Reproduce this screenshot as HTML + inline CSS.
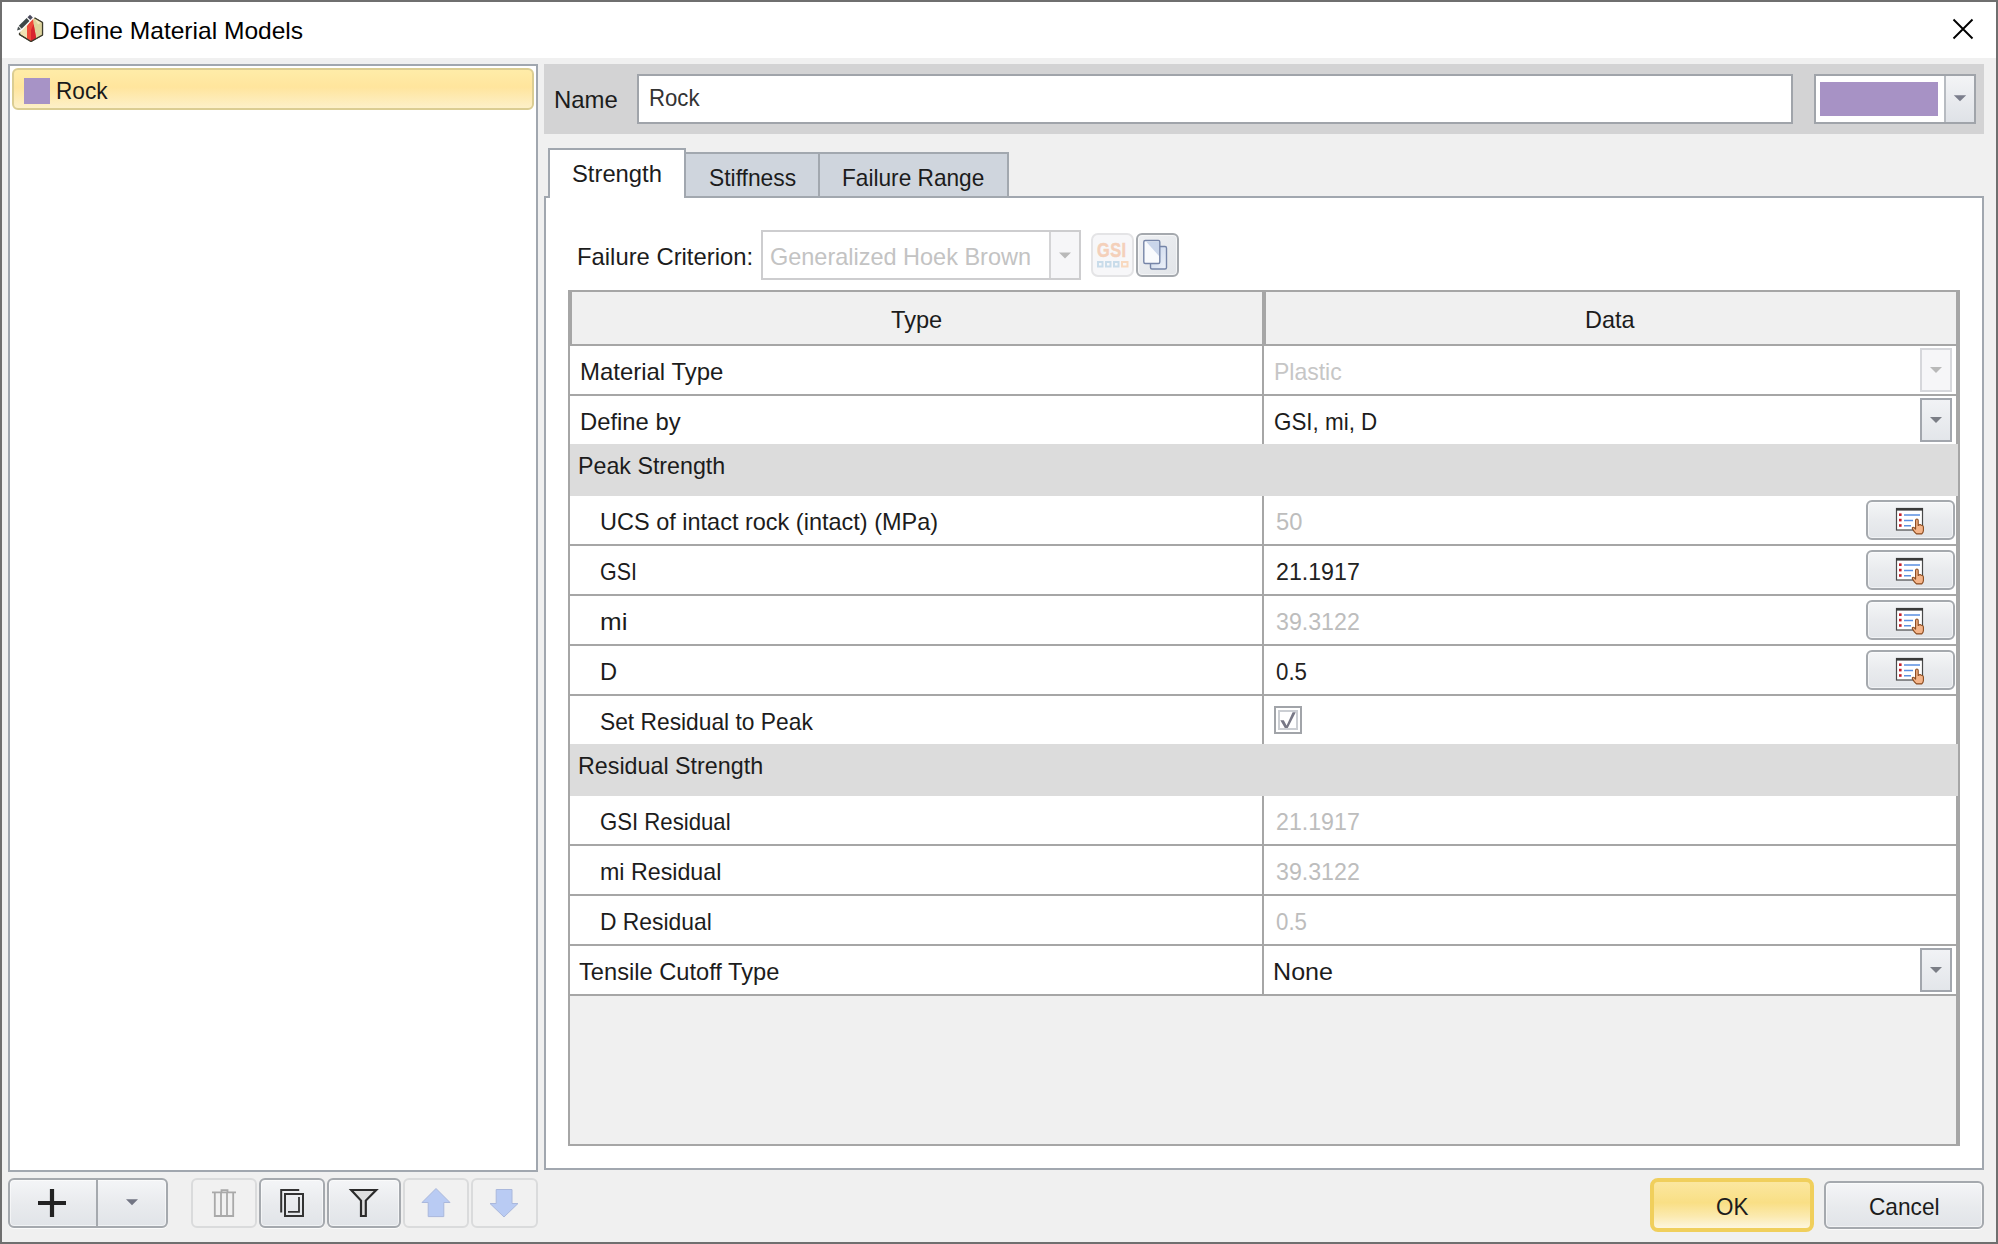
<!DOCTYPE html><html><head><meta charset="utf-8"><title>Define Material Models</title><style>
*{box-sizing:border-box}
html,body{margin:0;padding:0}
body{width:1998px;height:1244px;position:relative;overflow:hidden;background:#f0f0f0;font-family:"Liberation Sans",sans-serif}
.a{position:absolute}
.t{position:absolute;white-space:pre;transform-origin:0 0;display:block}
.win{left:0;top:0;width:1998px;height:1244px;border:2px solid #6f6f6f;background:#f0f0f0}
.titlebar{left:2px;top:2px;width:1994px;height:56px;background:#fff}
.panel{background:#fff;border:2px solid #a1a7af}
.btn{border:2px solid #a5a9ae;border-radius:6px;box-shadow:inset 0 0 0 1px rgba(255,255,255,.55),0 1px 0 rgba(255,255,255,.7);background:linear-gradient(#f4f5f7,#e9ebee 50%,#e1e4e8)}
.btn.dis{border-color:#dadbdc;background:#f1f1f1;box-shadow:none}
.hline{background:#a6a6a6;height:2px}
.vline{background:#a6a6a6;width:2px}
.sect{background:#dcdcdc}
.dd{border:2px solid #a2a6ad;background:linear-gradient(#f1f2f5,#e3e6ea)}
.dd.dis{border-color:#d6d7db;background:#f6f6f8}
svg{position:absolute;overflow:visible}
</style></head><body>
<div class="a win"></div>
<div class="a titlebar"></div>
<svg style="left:14px;top:12px" width="34" height="34" viewBox="14 12 34 34">
<polygon points="33,17 42.5,22.5 42.5,35 31,41.5 19.5,34.5 19.5,29" fill="#f1e2b4" stroke="#3d3b2c" stroke-width="1.2" stroke-linejoin="round"/>
<polygon points="34,17.5 42.5,22.5 42.5,35 36,38.5 33.5,24" fill="#ddd39c"/>
<polygon points="34,17.5 38,24.5 42,22.3" fill="#f3e6b8"/>
<polygon points="33,17.5 27,26 27,38.8 31,41.2 36.2,38.2 33.6,24" fill="#ee4a3a"/>
<polygon points="31,30 33.6,24 36.2,38.2 31,41.2" fill="#d8242f"/>
<polygon points="33,17 42.5,22.5 42.5,35 31,41.5 19.5,34.5 19.5,29" fill="none" stroke="#3d3b2c" stroke-width="1.2" stroke-linejoin="round"/>
<g transform="translate(17,30.5) rotate(-45)">
<rect x="-1" y="-3.4" width="23" height="6.8" fill="#fff"/>
<polygon points="0,0 3.6,-2 3.6,2" fill="#474f50"/>
<rect x="4.6" y="-2" width="11" height="4" fill="#3e4848"/>
<rect x="16.800" y="-2" width="3.6" height="4" fill="#4b4a5c"/>
</g>
</svg>
<span class="t" style="left:51.55px;top:19.0px;font-size:24px;line-height:24px;color:#000;transform:scaleX(1.0230)">Define Material Models</span>
<svg style="left:1950px;top:16px" width="26" height="26" viewBox="1950 16 26 26"><path d="M1953.5 19.5 L1972.5 38.5 M1972.5 19.5 L1953.5 38.5" stroke="#000" stroke-width="1.9" fill="none"/></svg>
<div class="a panel" style="left:8px;top:64px;width:530px;height:1108px"></div>
<div class="a" style="left:12px;top:68px;width:522px;height:42px;border:2px solid #dbcd92;border-radius:6px;background:linear-gradient(#ffeca8,#ffe59d 45%,#fdf0c8)"></div>
<div class="a" style="left:24px;top:78px;width:26px;height:26px;background:#a793c6"></div>
<span class="t" style="left:56.11px;top:79.0px;font-size:24px;line-height:24px;color:#1a1a1a;transform:scaleX(0.9434)">Rock</span>
<div class="a" style="left:544px;top:64px;width:1440px;height:70px;background:#d3d3d4"></div>
<span class="t" style="left:553.81px;top:88.0px;font-size:24px;line-height:24px;color:#1c1c1c;transform:scaleX(0.9967)">Name</span>
<div class="a" style="left:637px;top:74px;width:1156px;height:50px;background:#fff;border:2px solid #a0a4aa"></div>
<span class="t" style="left:649.15px;top:86.0px;font-size:24px;line-height:24px;color:#333;transform:scaleX(0.9245)">Rock</span>
<div class="a" style="left:1814px;top:74px;width:162px;height:50px;background:#fff;border:2px solid #a0a4aa"></div>
<div class="a" style="left:1820px;top:82px;width:118px;height:34px;background:#a792c5"></div>
<div class="a" style="left:1944px;top:76px;width:30px;height:46px;border-left:2px solid #b7bbc1;background:linear-gradient(#f3f4f6,#dfe2e7)"></div>
<svg style="left:1950px;top:90px" width="20" height="16" viewBox="1950 90 20 16"><polygon points="1953.8,95.2 1966.2,95.2 1960,101.2" fill="#7b7e8c"/></svg>
<div class="a panel" style="left:544px;top:196px;width:1440px;height:974px"></div>
<div class="a" style="left:684px;top:152px;width:136px;height:46px;background:#cfd5dd;border:2px solid #a2a8af"></div>
<div class="a" style="left:818px;top:152px;width:191px;height:46px;background:#cfd5dd;border:2px solid #a2a8af"></div>
<div class="a" style="left:548px;top:148px;width:138px;height:50px;background:#fff;border:2px solid #a1a7af;border-bottom:none"></div>
<span class="t" style="left:572.01px;top:162.0px;font-size:24px;line-height:24px;color:#1c1c1c;transform:scaleX(0.9910)">Strength</span>
<span class="t" style="left:708.55px;top:166.0px;font-size:24px;line-height:24px;color:#1c1c1c;transform:scaleX(0.9511)">Stiffness</span>
<span class="t" style="left:842.01px;top:166.0px;font-size:24px;line-height:24px;color:#1c1c1c;transform:scaleX(0.9439)">Failure Range</span>
<span class="t" style="left:576.52px;top:245.0px;font-size:24px;line-height:24px;color:#1c1c1c;transform:scaleX(0.9925)">Failure Criterion:</span>
<div class="a" style="left:761px;top:230px;width:320px;height:50px;background:#fff;border:2px solid #cdcdcf"></div>
<div class="a" style="left:1049px;top:232px;width:30px;height:46px;border-left:2px solid #d4d4d6;background:#f6f6f8"></div>
<svg style="left:1055px;top:248px" width="20" height="16" viewBox="1055 248 20 16"><polygon points="1059,252.5 1071,252.5 1065,258.5" fill="#b9b9b9"/></svg>
<span class="t" style="left:770.32px;top:245.0px;font-size:24px;line-height:24px;color:#c3c3c3;transform:scaleX(0.9781)">Generalized Hoek Brown</span>
<div class="a" style="left:1091px;top:233px;width:43px;height:44px;border:2px solid #e4e4e6;border-radius:7px;background:#f7f7f9"></div>
<span class="t" style="left:1096.5px;top:239px;font-size:21px;line-height:21px;font-weight:bold;color:#f4d0ba;-webkit-text-stroke:0.5px #f4d0ba;transform:scaleX(0.78);letter-spacing:0.5px">GSI</span>
<svg style="left:1095px;top:258px" width="36" height="12" viewBox="1095 258 36 12"><g fill="none" stroke-width="2"><rect x="1098" y="262" width="4.5" height="4.5" stroke="#c9dcea"/><rect x="1106" y="262" width="4.5" height="4.5" stroke="#c9dcea"/><rect x="1114" y="262" width="4.5" height="4.5" stroke="#c9dcea"/><rect x="1122" y="262" width="5.5" height="4.5" stroke="#f8d9bf"/></g></svg>
<div class="a btn" style="left:1136px;top:233px;width:43px;height:44px;background:linear-gradient(135deg,#eef0f3,#e2e5e9)"></div>
<svg style="left:1140px;top:238px" width="34" height="34" viewBox="1140 238 34 34">
<defs><linearGradient id="cg" x1="0" y1="0" x2="1" y2="1"><stop offset="0" stop-color="#c5d3ea"/><stop offset="1" stop-color="#eef2f9"/></linearGradient></defs>
<rect x="1150.5" y="246.5" width="16" height="22.5" rx="1.5" fill="url(#cg)" stroke="#7685a8" stroke-width="1.4"/>
<rect x="1143.8" y="240.5" width="16" height="23" rx="1.5" fill="#f8fafd" stroke="#7685a8" stroke-width="1.4"/>
<polygon points="1146,241.5 1159,241.5 1159,256" fill="#c9d5ea"/>
</svg>
<div class="a" style="left:568px;top:290px;width:1392px;height:856px;background:#f0f0f0;border:2px solid #a6a6a6"></div>
<div class="a" style="left:568px;top:290px;width:4px;height:56px;background:#a6a6a6"></div>
<div class="a" style="left:1262px;top:290px;width:4px;height:56px;background:#a6a6a6"></div>
<div class="a" style="left:1956px;top:290px;width:4px;height:856px;background:#a6a6a6"></div>
<div class="a hline" style="left:568px;top:344px;width:1392px"></div>
<div class="a" style="left:570px;top:346px;width:1386px;height:650px;background:#fff"></div>
<div class="a hline" style="left:570px;top:394px;width:1388px"></div>
<div class="a hline" style="left:570px;top:544px;width:1388px"></div>
<div class="a hline" style="left:570px;top:594px;width:1388px"></div>
<div class="a hline" style="left:570px;top:644px;width:1388px"></div>
<div class="a hline" style="left:570px;top:694px;width:1388px"></div>
<div class="a hline" style="left:570px;top:844px;width:1388px"></div>
<div class="a hline" style="left:570px;top:894px;width:1388px"></div>
<div class="a hline" style="left:570px;top:944px;width:1388px"></div>
<div class="a hline" style="left:570px;top:994px;width:1388px"></div>
<div class="a vline" style="left:1262px;top:346px;height:650px"></div>
<div class="a sect" style="left:570px;top:444px;width:1388px;height:52px"></div>
<div class="a sect" style="left:570px;top:744px;width:1388px;height:52px"></div>
<span class="t" style="left:891.00px;top:308.0px;font-size:24px;line-height:24px;color:#1c1c1c;transform:scaleX(0.9843)">Type</span>
<span class="t" style="left:1585.04px;top:308.0px;font-size:24px;line-height:24px;color:#1c1c1c;transform:scaleX(0.9776)">Data</span>
<span class="t" style="left:579.50px;top:360.0px;font-size:24px;line-height:24px;color:#1c1c1c;transform:scaleX(0.9979)">Material Type</span>
<span class="t" style="left:579.52px;top:410.0px;font-size:24px;line-height:24px;color:#1c1c1c;transform:scaleX(0.9920)">Define by</span>
<span class="t" style="left:577.56px;top:454.0px;font-size:24px;line-height:24px;color:#1c1c1c;transform:scaleX(0.9678)">Peak Strength</span>
<span class="t" style="left:599.54px;top:510.0px;font-size:24px;line-height:24px;color:#1c1c1c;transform:scaleX(0.9789)">UCS of intact rock (intact) (MPa)</span>
<span class="t" style="left:599.61px;top:560.0px;font-size:24px;line-height:24px;color:#1c1c1c;transform:scaleX(0.8921)">GSI</span>
<span class="t" style="left:600.04px;top:610.0px;font-size:24px;line-height:24px;color:#1c1c1c;transform:scaleX(1.0818)">mi</span>
<span class="t" style="left:600.23px;top:660.0px;font-size:24px;line-height:24px;color:#1c1c1c;transform:scaleX(0.9857)">D</span>
<span class="t" style="left:599.55px;top:710.0px;font-size:24px;line-height:24px;color:#1c1c1c;transform:scaleX(0.9493)">Set Residual to Peak</span>
<span class="t" style="left:577.56px;top:754.0px;font-size:24px;line-height:24px;color:#1c1c1c;transform:scaleX(0.9702)">Residual Strength</span>
<span class="t" style="left:599.58px;top:810.0px;font-size:24px;line-height:24px;color:#1c1c1c;transform:scaleX(0.9237)">GSI Residual</span>
<span class="t" style="left:599.56px;top:860.0px;font-size:24px;line-height:24px;color:#1c1c1c;transform:scaleX(0.9680)">mi Residual</span>
<span class="t" style="left:599.60px;top:910.0px;font-size:24px;line-height:24px;color:#1c1c1c;transform:scaleX(0.9518)">D Residual</span>
<span class="t" style="left:579.40px;top:960.0px;font-size:24px;line-height:24px;color:#1c1c1c;transform:scaleX(0.9856)">Tensile Cutoff Type</span>
<span class="t" style="left:1273.59px;top:360.0px;font-size:24px;line-height:24px;color:#c6c6c6;transform:scaleX(0.9574)">Plastic</span>
<span class="t" style="left:1273.57px;top:410.0px;font-size:24px;line-height:24px;color:#1c1c1c;transform:scaleX(0.9330)">GSI, mi, D</span>
<span class="t" style="left:1276.01px;top:510.0px;font-size:24px;line-height:24px;color:#bdbdbd;transform:scaleX(0.9880)">50</span>
<span class="t" style="left:1275.53px;top:560.0px;font-size:24px;line-height:24px;color:#222;transform:scaleX(0.9659)">21.1917</span>
<span class="t" style="left:1275.53px;top:610.0px;font-size:24px;line-height:24px;color:#bdbdbd;transform:scaleX(0.9659)">39.3122</span>
<span class="t" style="left:1275.57px;top:660.0px;font-size:24px;line-height:24px;color:#222;transform:scaleX(0.9281)">0.5</span>
<span class="t" style="left:1275.53px;top:810.0px;font-size:24px;line-height:24px;color:#bdbdbd;transform:scaleX(0.9659)">21.1917</span>
<span class="t" style="left:1275.53px;top:860.0px;font-size:24px;line-height:24px;color:#bdbdbd;transform:scaleX(0.9659)">39.3122</span>
<span class="t" style="left:1275.57px;top:910.0px;font-size:24px;line-height:24px;color:#bdbdbd;transform:scaleX(0.9281)">0.5</span>
<span class="t" style="left:1272.91px;top:960.0px;font-size:24px;line-height:24px;color:#1c1c1c;transform:scaleX(1.0463)">None</span>
<div class="a dd dis" style="left:1920px;top:348px;width:32px;height:44px"></div>
<svg style="left:1926px;top:363px" width="20" height="14" viewBox="0 0 20 14"><polygon points="4,4 16,4 10,10" fill="#b9b9b9"/></svg>
<div class="a dd" style="left:1920px;top:398px;width:32px;height:44px"></div>
<svg style="left:1926px;top:413px" width="20" height="14" viewBox="0 0 20 14"><polygon points="4,4 16,4 10,10" fill="#7b7e86"/></svg>
<div class="a dd" style="left:1920px;top:948px;width:32px;height:44px"></div>
<svg style="left:1926px;top:963px" width="20" height="14" viewBox="0 0 20 14"><polygon points="4,4 16,4 10,10" fill="#7b7e86"/></svg>
<div class="a btn" style="left:1866px;top:500px;width:89px;height:40px"></div>
<svg style="left:1890px;top:504px" width="44" height="36" viewBox="1890 504 44 36">
<rect x="1896.5" y="508.5" width="26" height="21.5" fill="#fff" stroke="#4a4a4a" stroke-width="1.2"/>
<rect x="1896" y="508" width="27" height="2.6" fill="#3a3a3a"/>
<rect x="1899" y="513.4" width="2.6" height="2.6" fill="#c4202c"/><rect x="1899" y="518.8" width="2.6" height="2.6" fill="#c4202c"/><rect x="1899" y="524.2" width="2.6" height="2.6" fill="#c4202c"/>
<path d="M1904 515h16M1904 520.4h9M1904 525.8h7" stroke="#5b8fe0" stroke-width="1.5"/>
<path d="M1915.6 520.5c0-2 2.6-2 2.6 0v5l1.2-.7c1-.5 1.6 0 1.8.5l1 .2c.8.2 1.2.8 1.2 1.6v3.400c0 1.200-.8 2.600-1.600 3.400h-5.400c-1-.8-3-3.200-4-5.200-.6-1.200.8-2 1.800-1l1.400 1.400z" fill="#f5b58a" stroke="#8a4a1e" stroke-width="1.1" stroke-linejoin="round"/>
</svg>
<div class="a btn" style="left:1866px;top:550px;width:89px;height:40px"></div>
<svg style="left:1890px;top:554px" width="44" height="36" viewBox="1890 504 44 36">
<rect x="1896.5" y="508.5" width="26" height="21.5" fill="#fff" stroke="#4a4a4a" stroke-width="1.2"/>
<rect x="1896" y="508" width="27" height="2.6" fill="#3a3a3a"/>
<rect x="1899" y="513.4" width="2.6" height="2.6" fill="#c4202c"/><rect x="1899" y="518.8" width="2.6" height="2.6" fill="#c4202c"/><rect x="1899" y="524.2" width="2.6" height="2.6" fill="#c4202c"/>
<path d="M1904 515h16M1904 520.4h9M1904 525.8h7" stroke="#5b8fe0" stroke-width="1.5"/>
<path d="M1915.6 520.5c0-2 2.6-2 2.6 0v5l1.2-.7c1-.5 1.6 0 1.8.5l1 .2c.8.2 1.2.8 1.2 1.6v3.400c0 1.200-.8 2.600-1.600 3.400h-5.400c-1-.8-3-3.200-4-5.200-.6-1.200.8-2 1.800-1l1.400 1.400z" fill="#f5b58a" stroke="#8a4a1e" stroke-width="1.1" stroke-linejoin="round"/>
</svg>
<div class="a btn" style="left:1866px;top:600px;width:89px;height:40px"></div>
<svg style="left:1890px;top:604px" width="44" height="36" viewBox="1890 504 44 36">
<rect x="1896.5" y="508.5" width="26" height="21.5" fill="#fff" stroke="#4a4a4a" stroke-width="1.2"/>
<rect x="1896" y="508" width="27" height="2.6" fill="#3a3a3a"/>
<rect x="1899" y="513.4" width="2.6" height="2.6" fill="#c4202c"/><rect x="1899" y="518.8" width="2.6" height="2.6" fill="#c4202c"/><rect x="1899" y="524.2" width="2.6" height="2.6" fill="#c4202c"/>
<path d="M1904 515h16M1904 520.4h9M1904 525.8h7" stroke="#5b8fe0" stroke-width="1.5"/>
<path d="M1915.6 520.5c0-2 2.6-2 2.6 0v5l1.2-.7c1-.5 1.6 0 1.8.5l1 .2c.8.2 1.2.8 1.2 1.6v3.400c0 1.200-.8 2.600-1.600 3.400h-5.400c-1-.8-3-3.200-4-5.200-.6-1.200.8-2 1.800-1l1.400 1.400z" fill="#f5b58a" stroke="#8a4a1e" stroke-width="1.1" stroke-linejoin="round"/>
</svg>
<div class="a btn" style="left:1866px;top:650px;width:89px;height:40px"></div>
<svg style="left:1890px;top:654px" width="44" height="36" viewBox="1890 504 44 36">
<rect x="1896.5" y="508.5" width="26" height="21.5" fill="#fff" stroke="#4a4a4a" stroke-width="1.2"/>
<rect x="1896" y="508" width="27" height="2.6" fill="#3a3a3a"/>
<rect x="1899" y="513.4" width="2.6" height="2.6" fill="#c4202c"/><rect x="1899" y="518.8" width="2.6" height="2.6" fill="#c4202c"/><rect x="1899" y="524.2" width="2.6" height="2.6" fill="#c4202c"/>
<path d="M1904 515h16M1904 520.4h9M1904 525.8h7" stroke="#5b8fe0" stroke-width="1.5"/>
<path d="M1915.6 520.5c0-2 2.6-2 2.6 0v5l1.2-.7c1-.5 1.6 0 1.8.5l1 .2c.8.2 1.2.8 1.2 1.6v3.400c0 1.200-.8 2.600-1.600 3.400h-5.400c-1-.8-3-3.200-4-5.200-.6-1.200.8-2 1.800-1l1.400 1.400z" fill="#f5b58a" stroke="#8a4a1e" stroke-width="1.1" stroke-linejoin="round"/>
</svg>
<div class="a" style="left:1274px;top:706px;width:28px;height:28px;border:2px solid #a1a4a9;background:#fff"></div>
<div class="a" style="left:1278px;top:710px;width:20px;height:20px;border:2px solid #cbced3;background:#fff"></div>
<svg style="left:1274px;top:706px" width="28" height="28" viewBox="1274 706 28 28"><polygon points="1280.3,720.3 1283.8,720.3 1286.6,725.6 1292.6,712.2 1295.8,712.2 1287.800,728 1284.800,728" fill="#787886"/></svg>
<div class="a btn" style="left:8px;top:1178px;width:160px;height:50px"></div>
<div class="a" style="left:96px;top:1180px;width:2px;height:46px;background:#a5a9ae"></div>
<svg style="left:30px;top:1180px" width="50" height="46" viewBox="30 1180 50 46"><path d="M38 1203h28M52 1189v28" stroke="#222" stroke-width="4.2" fill="none"/></svg>
<svg style="left:120px;top:1194px" width="24" height="16" viewBox="120 1194 24 16"><polygon points="126,1199.300 138,1199.300 132,1205.300" fill="#727583"/></svg>
<div class="a btn dis" style="left:191px;top:1178px;width:66px;height:50px"></div>
<svg style="left:205px;top:1184px" width="40" height="40" viewBox="205 1184 40 40"><g fill="none" stroke="#a9a9a9" stroke-width="1.8">
<path d="M212 1192.400h24M221.500 1192v-1.800h6v1.800"/>
<path d="M214.800 1193v23h18.400v-23M221 1193v23M227 1193v23"/></g></svg>
<div class="a btn" style="left:258.500px;top:1178px;width:66.500px;height:50px"></div>
<svg style="left:275px;top:1184px" width="40" height="40" viewBox="275 1184 40 40"><g fill="none" stroke="#333" stroke-width="2">
<path d="M281.200 1212.500v-22.400h18"/>
<rect x="285" y="1194" width="18" height="22"/>
<path d="M299 1197v14.800h-11" stroke-width="1.8"/></g></svg>
<div class="a btn" style="left:327px;top:1178px;width:74px;height:50px"></div>
<svg style="left:345px;top:1184px" width="40" height="40" viewBox="345 1184 40 40">
<path d="M351.200 1190h25l-10.400 10.600v15.400h-4.800v-15.400z" fill="#dedede" stroke="#2b2b2b" stroke-width="2.200" stroke-linejoin="miter"/></svg>
<div class="a btn dis" style="left:403px;top:1178px;width:66px;height:50px"></div>
<svg style="left:418px;top:1184px" width="40" height="40" viewBox="418 1184 40 40"><polygon points="436,1188.500 450,1202.500 443.800,1202.500 443.800,1216.600 428.200,1216.600 428.200,1202.500 422,1202.500" fill="#b9cbf3" stroke="#aab8dc" stroke-width="1"/></svg>
<div class="a btn dis" style="left:471px;top:1178px;width:66.500px;height:50px"></div>
<svg style="left:486px;top:1184px" width="40" height="40" viewBox="486 1184 40 40"><polygon points="496.200,1189.500 512,1189.500 512,1203.500 518,1203.500 504,1217 490,1203.500 496.200,1203.500" fill="#b9cbf3" stroke="#aab8dc" stroke-width="1"/></svg>
<div class="a" style="left:1650px;top:1178px;width:164px;height:54px;border-radius:8px;border:4px solid #f0cf5c;background:linear-gradient(#fbe7a0,#f9df85 45%,#fbeab0 75%,#fdf6df)"></div>
<span class="t" style="left:1716.07px;top:1195.0px;font-size:24px;line-height:24px;color:#1c1c1c;transform:scaleX(0.9333)">OK</span>
<div class="a btn" style="left:1824px;top:1181px;width:160px;height:48px"></div>
<span class="t" style="left:1869.06px;top:1195.0px;font-size:24px;line-height:24px;color:#1c1c1c;transform:scaleX(0.9444)">Cancel</span>
</body></html>
